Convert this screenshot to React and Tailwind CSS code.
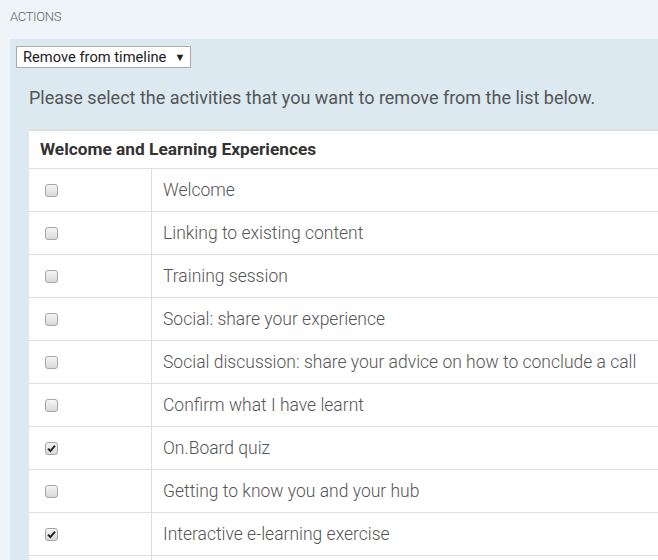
import React from "react";

const activities = [
  { title: "Welcome", checked: false },
  { title: "Linking to existing content", checked: false },
  { title: "Training session", checked: false },
  { title: "Social: share your experience", checked: false },
  { title: "Social discussion: share your advice on how to conclude a call", checked: false },
  { title: "Confirm what I have learnt", checked: false },
  { title: "On.Board quiz", checked: true },
  { title: "Getting to know you and your hub", checked: false },
  { title: "Interactive e-learning exercise", checked: true },
  { title: "Final reflection", checked: false },
];

function Checkbox({ checked, onChange }) {
  return (
    <button
      type="button"
      onClick={onChange}
      className="w-[13px] h-[13px] rounded-[3px] border border-[#a6a6a6] bg-gradient-to-b from-[#f5f5f5] to-[#d9d9d9] flex items-center justify-center p-0"
    >
      {checked && (
        <svg width="9" height="9" viewBox="0 0 9 9">
          <path d="M1 4.6 L3.4 7 L8 1.6" fill="none" stroke="#222" strokeWidth="1.9" />
        </svg>
      )}
    </button>
  );
}

export default function App() {
  const [rows, setRows] = React.useState(activities);

  const toggle = (i) => {
    setRows(rows.map((r, j) => (j === i ? { ...r, checked: !r.checked } : r)));
  };

  return (
    <div className="w-[658px] h-[560px] overflow-hidden bg-[#eef4f8] font-['Roboto',sans-serif]">
      <div className="pl-[10px] pt-[7px] h-[39px] text-[13px] font-light text-[#666] tracking-tight">ACTIONS</div>
      <div className="ml-[10px] bg-[#dce9f1] pt-[7px] pl-[6px] w-[700px]">
        <div className="flex items-center h-[22px] w-[175px] bg-white border border-[#a9a9a9] pl-[6px] text-[14.7px] text-[#222] leading-none">
          <span>Remove from timeline</span>
          <span className="ml-[8px] text-[11px]">▼</span>
        </div>
        <p className="ml-[13px] mt-[18px] mb-[19px] text-[18px] text-[#555] leading-[24px]">
          Please select the activities that you want to remove from the list below.
        </p>
        <div className="ml-[13px] bg-white border-t-2 border-[#dedede]">
          <div className="h-[38px] flex items-center pl-[11px] text-[17.3px] font-bold text-[#333] border-b border-[#dedede]">
            Welcome and Learning Experiences
          </div>
          {rows.map((r, i) => (
            <div key={i} className="flex h-[43px] border-b border-[#dedede]">
              <div className="w-[123px] border-r border-[#dedede] flex items-center pl-[16px]">
                <Checkbox checked={r.checked} onChange={() => toggle(i)} />
              </div>
              <div className="flex items-center pl-[11px] text-[17.5px] font-light text-[#555]">{r.title}</div>
            </div>
          ))}
        </div>
      </div>
    </div>
  );
}
